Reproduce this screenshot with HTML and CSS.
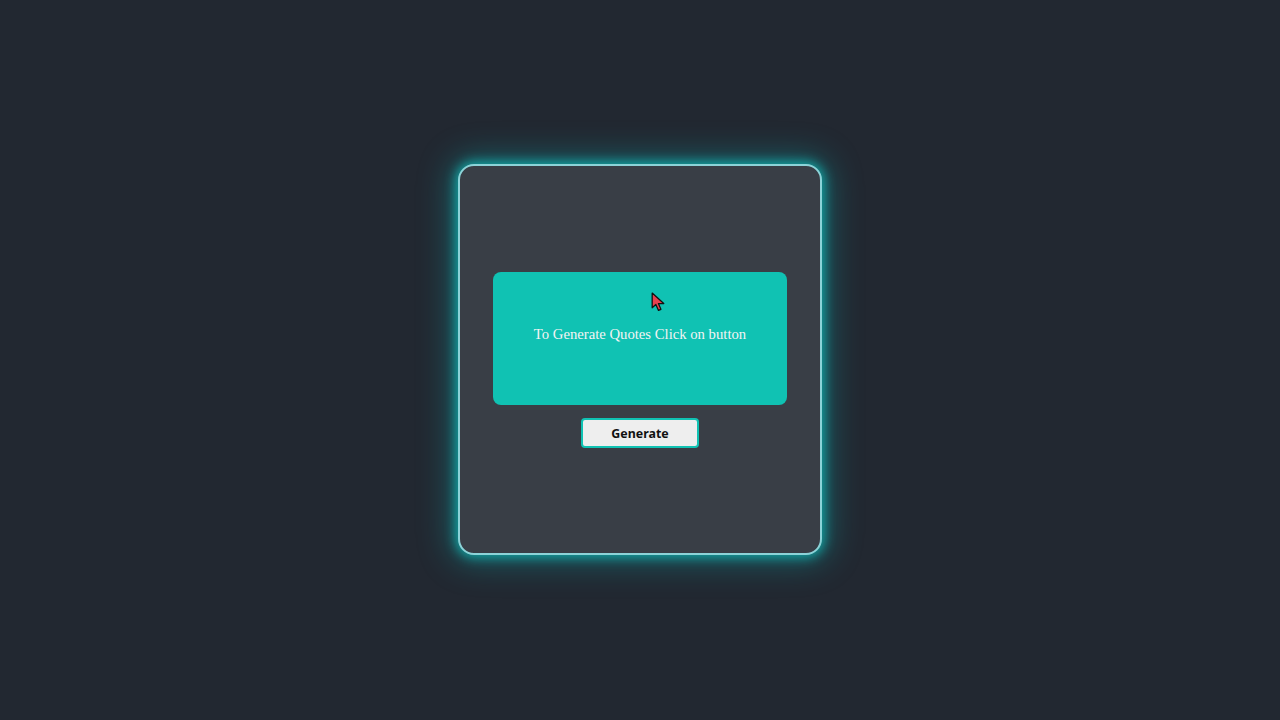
FILE: index.html
```html
<!DOCTYPE html>
<html lang="en">
<head>
<meta charset="utf-8">
<title>Quote Generator</title>
<link rel="stylesheet" href="styles.css">
</head>
<body>
<main class="card">
  <div class="quote-box">
    <p class="quote-text">To Generate Quotes Click on button</p>
    <svg class="cursor" width="15" height="20" viewBox="0 0 14 19" aria-hidden="true">
      <path d="M1 1 L1 15 L4.5 11.8 L7 17.5 L9.3 16.5 L6.9 11 L12 11 Z" fill="#e8414f" stroke="#111" stroke-width="1.2" stroke-linejoin="round"/>
    </svg>
  </div>
  <button class="generate-btn" type="button">Generate</button>
</main>
</body>
</html>
```

FILE: styles.css
```css
* {
  box-sizing: border-box;
}

html, body {
  margin: 0;
  height: 100%;
}

body {
  background: #222831;
  display: flex;
  align-items: center;
  justify-content: center;
  font-family: "Liberation Serif", serif;
}

.card {
  width: 364px;
  height: 391px;
  background: #393e46;
  border: 2px solid #8cd3d8;
  border-radius: 16px;
  box-shadow: 0 0 12px 2px rgba(16, 194, 190, 0.8), 0 0 32px 8px rgba(16, 170, 175, 0.4);
  display: flex;
  flex-direction: column;
  align-items: center;
  justify-content: center;
  gap: 13px;
  margin-top: -1px;
}

.quote-box {
  position: relative;
  width: 294px;
  height: 133px;
  background: #10c2b3;
  border-radius: 8px;
  display: flex;
  align-items: center;
  justify-content: center;
  padding: 0 20px 7px;
}

.quote-text {
  margin: 0;
  color: #f4f4f4;
  font-family: "Liberation Serif", serif;
  font-size: 14.7px;
  text-align: center;
}

.cursor {
  position: absolute;
  left: 158px;
  top: 20px;
}

.generate-btn {
  width: 118px;
  height: 30px;
  background: #eeeeee;
  border: 2px solid #10c2b3;
  border-radius: 4px;
  font-family: "Noto Sans", "Open Sans", sans-serif;
  font-weight: 700;
  font-size: 12.4px;
  color: #111;
  padding: 2px 0 0;
  cursor: pointer;
}
```
